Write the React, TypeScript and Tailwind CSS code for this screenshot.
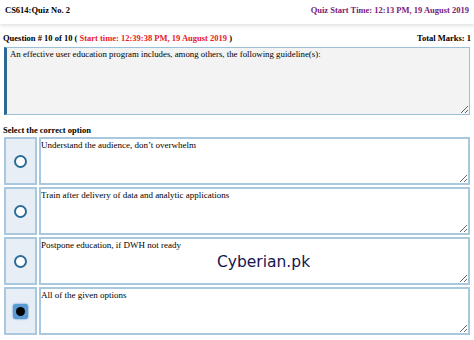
import React from 'react';

const options = [
  'Understand the audience, don’t overwhelm',
  'Train after delivery of data and analytic applications',
  'Postpone education, if DWH not ready',
  'All of the given options',
];

const Radio = ({ checked }: { checked: boolean }) =>
  checked ? (
    <span className="flex h-[15px] w-[15px] items-center justify-center rounded-[3px] bg-[#5b9bd5] shadow-[0_0_2px_#3b7bbf]">
      <span className="h-[9px] w-[9px] rounded-full bg-black" />
    </span>
  ) : (
    <span className="h-[13px] w-[13px] rounded-full border-[2.5px] border-[#2a6b98] bg-white" />
  );

export default function App() {
  return (
    <div className="relative h-[340px] w-[474px] overflow-hidden bg-white font-['Liberation_Serif',serif] text-black">
      <div className="flex items-center justify-between px-[5px] pb-[8px] pt-[4px] text-[8.5px] font-bold leading-[12px] shadow-[0_2px_4px_rgba(0,0,0,0.12)]">
        <span>CS614:Quiz No. 2</span>
        <span className="text-[#7a1a78]">Quiz Start Time: 12:13 PM, 19 August 2019</span>
      </div>

      <div className="mt-[8px] flex items-center justify-between px-[3px] text-[8.5px] font-bold leading-[12px]">
        <span>
          Question # 10 of 10 ( <span className="text-[#e8202a]">Start time: 12:39:38 PM, 19 August 2019</span> )
        </span>
        <span>Total Marks: 1</span>
      </div>

      <div className="mx-[4px] mt-[3px]">
        <textarea
          readOnly
          defaultValue="An effective user education program includes, among others, the following guideline(s):"
          className="block h-[68px] w-full resize-y border border-l-[3px] border-[#9cc0d8] border-l-[#2c6892] bg-[#f3f3f3] px-[3px] py-[1px] text-[8.8px] leading-[11px] outline-none"
        />
      </div>

      <div className="mt-[9px] px-[3px] text-[8.5px] font-bold leading-[12px]">Select the correct option</div>

      <div className="mx-[4px] mt-[1px] flex flex-col gap-[2px]">
        {options.map((o, i) => (
          <div key={o} className="flex h-[48px] gap-[2px]">
            <div className="flex w-[33px] shrink-0 items-center justify-center border-2 border-[#a9c8dd] bg-[#e7eef6]">
              <Radio checked={i === 3} />
            </div>
            <textarea
              readOnly
              defaultValue={o}
              className="block h-full flex-1 resize-y border-2 border-[#a9c8dd] bg-white px-0 py-[1px] text-[9px] leading-[11px] outline-none"
            />
          </div>
        ))}
      </div>

      <span className="pointer-events-none absolute left-[217px] top-[251px] font-['DejaVu_Sans',sans-serif] text-[15.5px] text-[#15154f]">
        Cyberian.pk
      </span>
    </div>
  );
}
